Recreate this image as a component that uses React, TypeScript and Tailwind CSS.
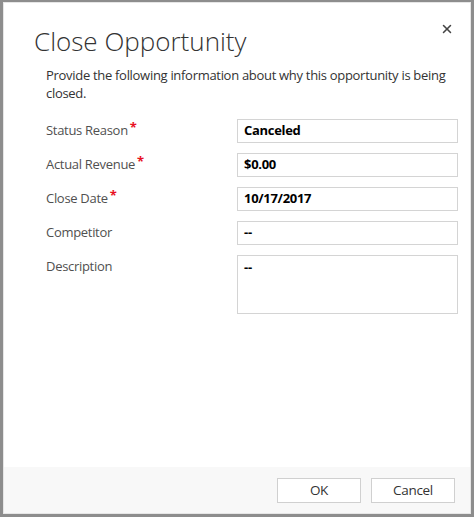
import { X } from 'lucide-react';

const fields = [
  { label: 'Status Reason', value: 'Canceled', required: true },
  { label: 'Actual Revenue', value: '$0.00', required: true },
  { label: 'Close Date', value: '10/17/2017', required: true },
  { label: 'Competitor', value: '--', required: false },
];

export default function App() {
  return (
    <div
      className="w-[474px] h-[517px] bg-[#8d8d8d] pt-[2px] pl-[3px] pr-[3px] pb-[3px] tracking-[-0.3px]"
      style={{ fontFamily: '"Open Sans", "Noto Sans", sans-serif' }}
    >
      <div className="h-full flex flex-col bg-white border border-[#e6e6e6]">
        <div className="flex-1 relative">
          <button className="absolute top-[19px] right-[16px] text-[#444]">
            <X className="w-[14px] h-[14px]" strokeWidth={2.6} />
          </button>
          <h1 className="pl-[30px] pt-[18px] text-[26px] leading-[40px] font-light tracking-normal text-[#333]">
            Close Opportunity
          </h1>
          <p className="pl-[42px] pr-[8px] mt-[5px] text-[13px] leading-[18px] text-[#333]">
            Provide the following information about why this opportunity is being closed.
          </p>
          <div className="mt-[17px] pl-[42px] pr-[12px] flex flex-col gap-[10px]">
            {fields.map((f) => (
              <div key={f.label} className="flex items-center h-[24px]">
                <div className="w-[191px] text-[13px] text-[#505050]">
                  {f.label}
                  {f.required && <span className="text-[#e81123] font-bold ml-[2px] relative -top-[3px]">*</span>}
                </div>
                <div className="flex-1 h-[24px] border border-[#d4d4d4] px-[6px] flex items-center text-[13px] font-bold text-black">
                  {f.value}
                </div>
              </div>
            ))}
            <div className="flex items-start">
              <div className="w-[191px] text-[13px] text-[#505050] pt-[2px]">Description</div>
              <div className="flex-1 h-[59px] border border-[#d4d4d4] px-[6px] pt-[2px] text-[13px] font-bold text-black">
                --
              </div>
            </div>
          </div>
        </div>
        <div className="h-[46px] bg-[#f8f8f8] flex items-center justify-end gap-[10px] pr-[15px]">
          <button className="w-[84px] h-[25px] bg-white border border-[#d0d0d0] text-[13.5px] text-[#333]">OK</button>
          <button className="w-[84px] h-[25px] bg-white border border-[#d0d0d0] text-[13.5px] text-[#333]">Cancel</button>
        </div>
      </div>
    </div>
  );
}
